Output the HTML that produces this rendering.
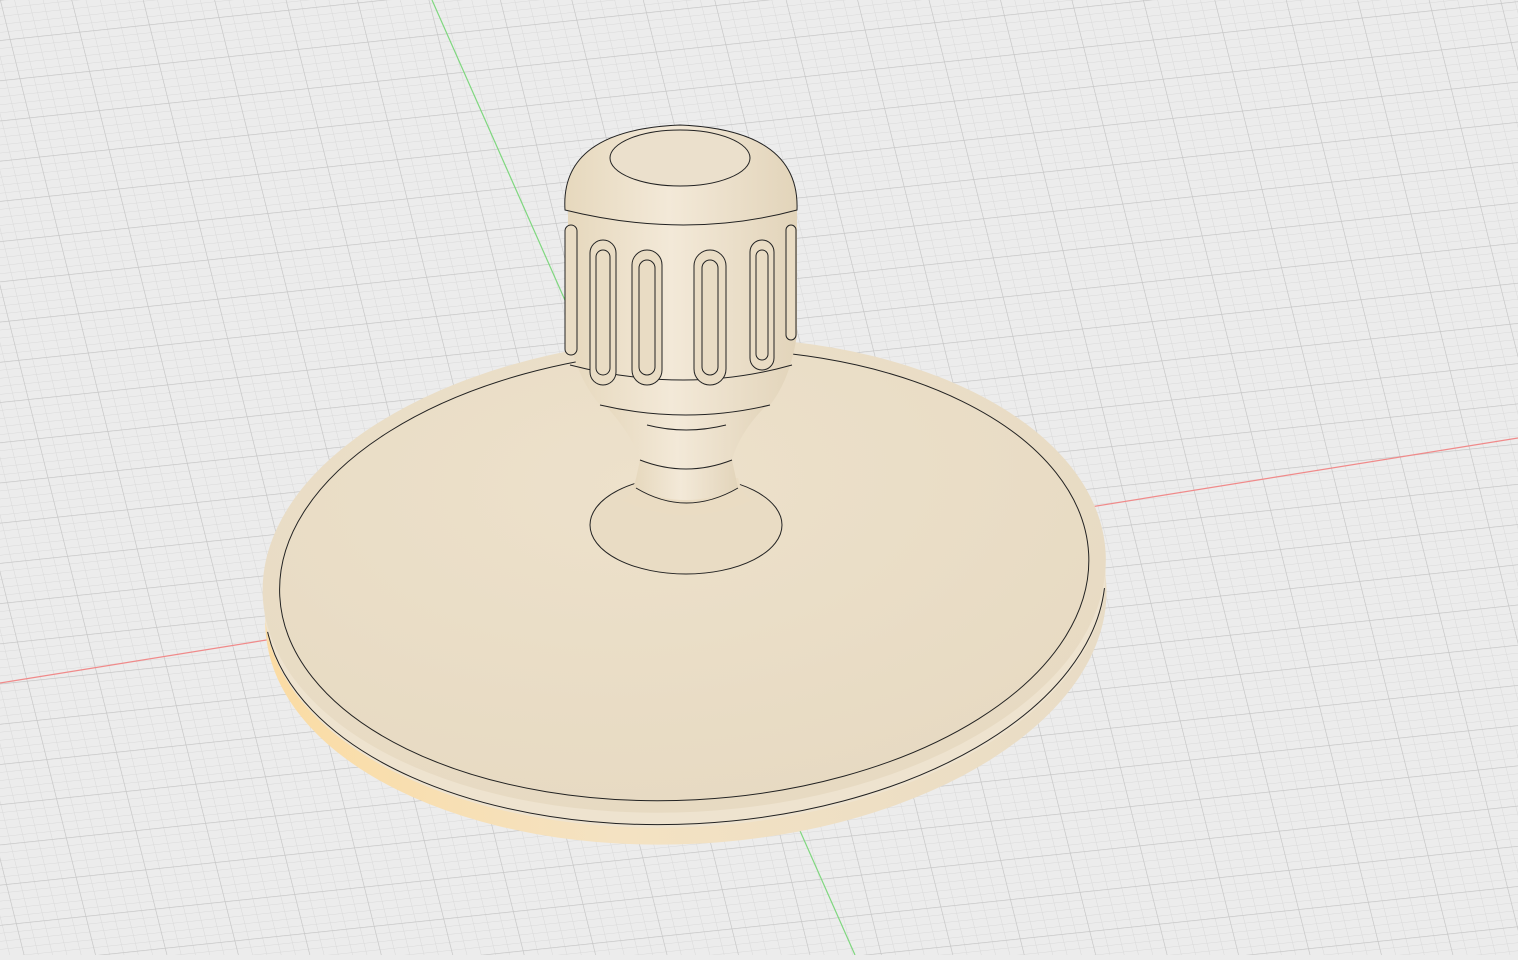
<!DOCTYPE html>
<html><head><style>html,body{margin:0;padding:0;background:#ececec;overflow:hidden}</style></head>
<body>
<svg width="1518" height="955" viewBox="0 0 1518 955" xmlns="http://www.w3.org/2000/svg">
<defs>
<pattern id="minor" width="14" height="8" patternUnits="userSpaceOnUse" patternTransform="rotate(-6) skewX(8)">
<path d="M0 0H14M0 0V8" stroke="#d9d9d9" stroke-width="1" fill="none"/>
</pattern>
<pattern id="major" width="70" height="40" patternUnits="userSpaceOnUse" patternTransform="rotate(-6) skewX(8)">
<path d="M0 0H70M0 0V40" stroke="#c4c4c4" stroke-width="1.2" fill="none"/>
</pattern>
<linearGradient id="rim" x1="0" y1="0" x2="1" y2="0">
<stop offset="0" stop-color="#fbdca4"/><stop offset="0.4" stop-color="#f4e2c2"/><stop offset="1" stop-color="#e8dcc6"/>
</linearGradient>
<radialGradient id="top" cx="0.45" cy="0.3" r="0.8">
<stop offset="0" stop-color="#ede1cb"/><stop offset="1" stop-color="#e6d9c1"/>
</radialGradient>
<linearGradient id="body" x1="0" y1="0" x2="1" y2="0">
<stop offset="0" stop-color="#e6d8bd"/><stop offset="0.45" stop-color="#f3e9d8"/><stop offset="1" stop-color="#e2d4ba"/>
</linearGradient>
</defs>
<rect width="1518" height="955" fill="#ececec"/>
<rect width="1518" height="955" fill="url(#minor)"/>
<rect width="1518" height="955" fill="url(#major)"/>
<line x1="0" y1="683" x2="1518" y2="438" stroke="#f08a8a" stroke-width="1.2"/>
<line x1="432" y1="0" x2="855" y2="955" stroke="#7fd77f" stroke-width="1.2"/>
<g transform="rotate(-3 685 590)">
<ellipse cx="685" cy="607" rx="421" ry="237" fill="url(#rim)"/>
<ellipse cx="685" cy="590" rx="421" ry="237" fill="#eee3cf"/>
<path d="M266 610 A421 237 0 0 0 1104 610" fill="none" stroke="#222" stroke-width="1"/>
<ellipse cx="685" cy="575" rx="422" ry="237" fill="url(#top)"/>
<ellipse cx="685" cy="575" rx="405" ry="225" fill="none" stroke="#222" stroke-width="1"/>
</g>
<ellipse cx="686" cy="525" rx="96" ry="49" fill="#e9dcc4" stroke="#222" stroke-width="1"/>
<path d="M636 478 L738 478 Q742 495 752 500 Q686 530 622 500 Q632 495 636 478 Z" fill="#eadcc3"/>
<path d="M640 460 L732 460 L738 488 Q686 512 634 488 Z" fill="url(#body)"/>
<path d="M636 488 Q686 518 738 488" fill="none" stroke="#222"/>
<path d="M600 400 L772 400 Q740 430 732 460 Q686 476 640 460 Q630 430 600 400 Z" fill="url(#body)"/>
<path d="M640 460 Q686 478 732 460" fill="none" stroke="#222"/>
<path d="M647 425 Q686 435 726 425" fill="none" stroke="#222"/>
<path d="M568 210 L797 210 L797 335 Q790 380 770 405 Q686 425 600 405 Q578 380 568 335 Z" fill="url(#body)"/>
<path d="M600 405 Q686 425 770 405" fill="none" stroke="#222"/>
<path d="M570 365 Q686 395 792 365" fill="none" stroke="#222"/>
<path d="M565 210 Q560 130 680 125 Q800 130 797 210 Q686 240 565 210 Z" fill="url(#body)" stroke="#222"/>
<ellipse cx="680" cy="158" rx="70" ry="28" fill="#ebe0cc" stroke="#222"/>
<g fill="#e9dcc4" stroke="#222" stroke-width="1">
<rect x="565" y="225" width="12" height="130" rx="6"/>
<rect x="590" y="240" width="26" height="145" rx="13"/>
<rect x="632" y="250" width="30" height="135" rx="15"/>
<rect x="694" y="250" width="32" height="135" rx="16"/>
<rect x="750" y="240" width="24" height="130" rx="12"/>
<rect x="786" y="225" width="10" height="115" rx="5"/>
</g>
<g fill="none" stroke="#222" stroke-width="1">
<rect x="596" y="250" width="14" height="125" rx="7"/>
<rect x="639" y="260" width="16" height="115" rx="8"/>
<rect x="702" y="260" width="16" height="115" rx="8"/>
<rect x="756" y="250" width="12" height="110" rx="6"/>
</g>
</svg>
</body></html>
